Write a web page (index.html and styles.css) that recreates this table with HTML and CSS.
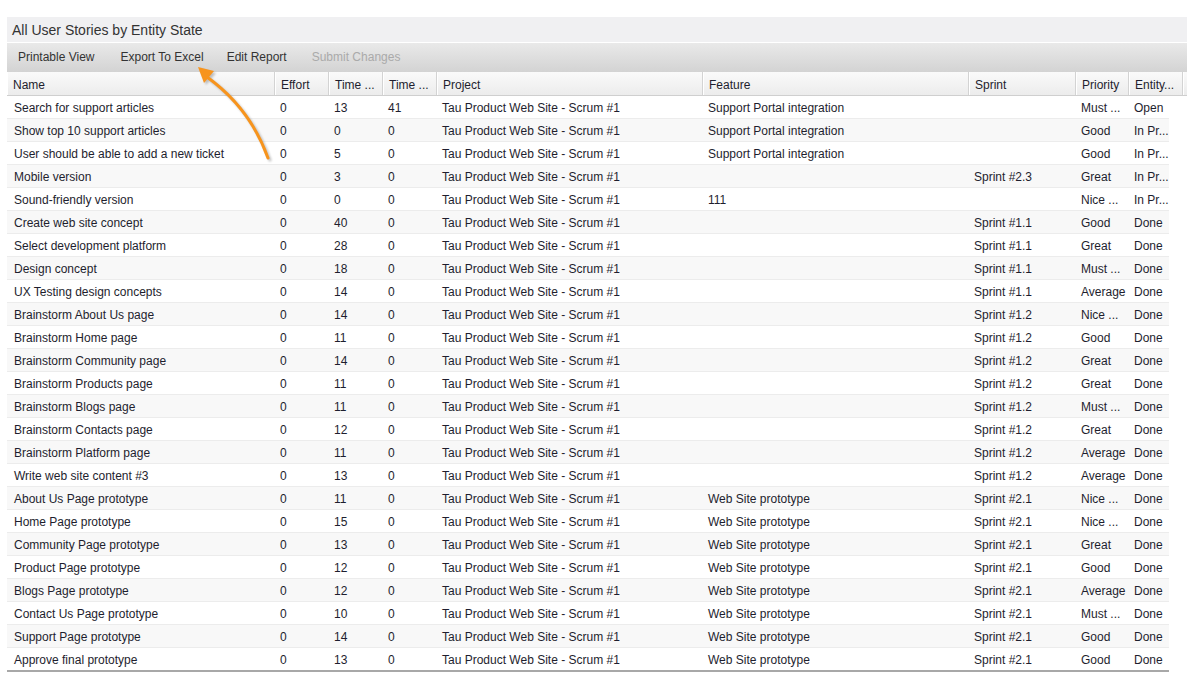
FILE: index.html
```html
<!DOCTYPE html>
<html>
<head>
<meta charset="utf-8">
<link rel="stylesheet" href="styles.css">
</head>
<body>
<div class="panel">
  <div class="title">All User Stories by Entity State</div>
  <div class="toolbar">
    <span class="btn">Printable View</span>
    <span class="btn">Export To Excel</span>
    <span class="btn">Edit Report</span>
    <span class="btn disabled">Submit Changes</span>
  </div>
  <div class="head">
    <div class="hrow">
      <div>Name</div><div>Effort</div><div>Time ...</div><div>Time ...</div><div>Project</div><div>Feature</div><div>Sprint</div><div>Priority</div><div>Entity...</div><div class="filler"></div>
    </div>
  </div>
  <div class="body" id="body"></div>
</div>
<svg class="arrow" width="120" height="120" viewBox="180 55 120 120">
  <defs>
    <filter id="sh" x="-20%" y="-20%" width="140%" height="140%">
      <feGaussianBlur stdDeviation="1.2"/>
    </filter>
  </defs>
  <g transform="translate(2,2)" opacity="0.35" filter="url(#sh)">
    <path d="M268,158 Q250,108 207,77" fill="none" stroke="#555" stroke-width="3" stroke-linecap="round"/>
    <polygon points="198,67 214,71 204,83" fill="#555"/>
  </g>
  <path d="M268,158 Q250,108 207,77" fill="none" stroke="#f7941d" stroke-width="3" stroke-linecap="round"/>
  <polygon points="198,67 214,71 204,83" fill="#f7941d"/>
</svg>
<script src="app.js"></script>
</body>
</html>
```
FILE: app.js
```js
var rows = [
["Search for support articles","0","13","41","Tau Product Web Site - Scrum #1","Support Portal integration","","Must ...","Open"],
["Show top 10 support articles","0","0","0","Tau Product Web Site - Scrum #1","Support Portal integration","","Good","In Pr..."],
["User should be able to add a new ticket","0","5","0","Tau Product Web Site - Scrum #1","Support Portal integration","","Good","In Pr..."],
["Mobile version","0","3","0","Tau Product Web Site - Scrum #1","","Sprint #2.3","Great","In Pr..."],
["Sound-friendly version","0","0","0","Tau Product Web Site - Scrum #1","111","","Nice ...","In Pr..."],
["Create web site concept","0","40","0","Tau Product Web Site - Scrum #1","","Sprint #1.1","Good","Done"],
["Select development platform","0","28","0","Tau Product Web Site - Scrum #1","","Sprint #1.1","Great","Done"],
["Design concept","0","18","0","Tau Product Web Site - Scrum #1","","Sprint #1.1","Must ...","Done"],
["UX Testing design concepts","0","14","0","Tau Product Web Site - Scrum #1","","Sprint #1.1","Average","Done"],
["Brainstorm About Us page","0","14","0","Tau Product Web Site - Scrum #1","","Sprint #1.2","Nice ...","Done"],
["Brainstorm Home page","0","11","0","Tau Product Web Site - Scrum #1","","Sprint #1.2","Good","Done"],
["Brainstorm Community page","0","14","0","Tau Product Web Site - Scrum #1","","Sprint #1.2","Great","Done"],
["Brainstorm Products page","0","11","0","Tau Product Web Site - Scrum #1","","Sprint #1.2","Great","Done"],
["Brainstorm Blogs page","0","11","0","Tau Product Web Site - Scrum #1","","Sprint #1.2","Must ...","Done"],
["Brainstorm Contacts page","0","12","0","Tau Product Web Site - Scrum #1","","Sprint #1.2","Great","Done"],
["Brainstorm Platform page","0","11","0","Tau Product Web Site - Scrum #1","","Sprint #1.2","Average","Done"],
["Write web site content #3","0","13","0","Tau Product Web Site - Scrum #1","","Sprint #1.2","Average","Done"],
["About Us Page prototype","0","11","0","Tau Product Web Site - Scrum #1","Web Site prototype","Sprint #2.1","Nice ...","Done"],
["Home Page prototype","0","15","0","Tau Product Web Site - Scrum #1","Web Site prototype","Sprint #2.1","Nice ...","Done"],
["Community Page prototype","0","13","0","Tau Product Web Site - Scrum #1","Web Site prototype","Sprint #2.1","Great","Done"],
["Product Page prototype","0","12","0","Tau Product Web Site - Scrum #1","Web Site prototype","Sprint #2.1","Good","Done"],
["Blogs Page prototype","0","12","0","Tau Product Web Site - Scrum #1","Web Site prototype","Sprint #2.1","Average","Done"],
["Contact Us Page prototype","0","10","0","Tau Product Web Site - Scrum #1","Web Site prototype","Sprint #2.1","Must ...","Done"],
["Support Page prototype","0","14","0","Tau Product Web Site - Scrum #1","Web Site prototype","Sprint #2.1","Good","Done"],
["Approve final prototype","0","13","0","Tau Product Web Site - Scrum #1","Web Site prototype","Sprint #2.1","Good","Done"]
];
var body = document.getElementById("body");
rows.forEach(function (r, i) {
  var row = document.createElement("div");
  row.className = "row" + (i % 2 ? " alt" : "");
  r.forEach(function (c) {
    var d = document.createElement("div");
    d.textContent = c;
    row.appendChild(d);
  });
  body.appendChild(row);
});
```
FILE: styles.css
```css
html, body {
  margin: 0;
  padding: 0;
  background: #fff;
}
body {
  padding: 17px 8px 0 7px;
  font-family: "Liberation Sans", Arial, sans-serif;
  font-size: 12px;
  color: #1e1e2e;
  position: relative;
}
.panel {
  width: 1180px;
}
.title {
  height: 24px;
  line-height: 24px;
  padding-top: 1px;
  background: #f0f0f2;
  padding-left: 5px;
  font-size: 14px;
  color: #333;
  border-bottom: 1px solid #fff;
}
.toolbar {
  height: 22px;
  padding-top: 7px;
  line-height: 14px;
  background: linear-gradient(#e9e9e9, #d3d3d3);
  display: flex;
  align-items: flex-start;
  padding-left: 11px;
}
.btn {
  color: #333;
  margin-right: 26px;
}
.btn:nth-child(2) { margin-right: 23px; }
.btn:nth-child(3) { margin-right: 25px; }
.btn.disabled { color: #aaa; }
.hrow {
  display: grid;
  grid-template-columns: 267px 54px 54px 54px 266px 266px 107px 53px 54px 1fr;
  height: 23px;
  background: linear-gradient(#fafafa, #ececec);
  border-bottom: 1px solid #cfcfcf;
}
.hrow > div {
  line-height: 20px;
  padding-top: 3px;
  padding-left: 6px;
  border-left: 1px solid #d3d3d3;
  box-shadow: inset 1px 0 0 #fff;
  white-space: nowrap;
  overflow: hidden;
  color: #1e1e2e;
}
.hrow > div:first-child {
  border-left: none;
  padding-left: 6px;
}
.body {
  width: 1162px;
  overflow: hidden;
  border-bottom: 2px solid #a8a8a8;
}
.row {
  display: grid;
  grid-template-columns: 267px 54px 54px 54px 266px 266px 107px 53px 54px;
  height: 22px;
  border-bottom: 1px solid #ececec;
  background: #fff;
}
.row.alt { background: #f8f8f8; }
.row:last-child { border-bottom: none; }
.row > div {
  line-height: 20px;
  padding-top: 2px;
  padding-left: 6px;
  white-space: nowrap;
  overflow: hidden;
}
.row > div:first-child { padding-left: 7px; }
.arrow {
  position: absolute;
  left: 180px;
  top: 55px;
}
```
